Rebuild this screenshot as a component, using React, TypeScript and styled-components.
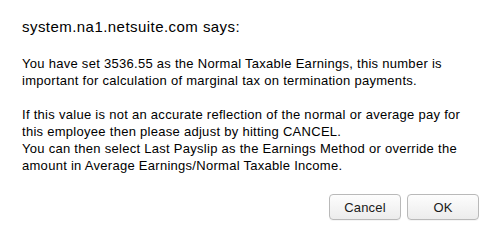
import React from 'react';
import styled, { createGlobalStyle } from 'styled-components';

const GlobalStyle = createGlobalStyle`
  html, body {
    margin: 0;
    padding: 0;
    background: #ffffff;
  }
  body {
    font-family: "Liberation Sans", Arial, sans-serif;
    -webkit-font-smoothing: antialiased;
  }
`;

const Dialog = styled.div`
  width: 500px;
  height: 241px;
  box-sizing: border-box;
  background: #ffffff;
  padding: 18px 21px 0 22px;
  display: flex;
  flex-direction: column;
`;

const Title = styled.h1`
  margin: 0;
  font-size: 15px;
  font-weight: normal;
  line-height: 18px;
  letter-spacing: 0.45px;
  color: #000;
`;

const Message = styled.div`
  margin-top: 19px;
  font-size: 13px;
  line-height: 17px;
  letter-spacing: 0.28px;
  color: #000;
`;

const Paragraph = styled.p`
  margin: 0 0 17px;
  &:last-child {
    margin-bottom: 0;
  }
`;

const Actions = styled.div`
  margin-top: 20px;
  display: flex;
  justify-content: flex-end;
  gap: 6px;
`;

const Button = styled.button`
  width: 72px;
  height: 26px;
  box-sizing: border-box;
  border: 1px solid #b9b9b9;
  border-radius: 4px;
  background: linear-gradient(#fdfdfd, #ececec);
  font-family: "Liberation Sans", Arial, sans-serif;
  font-size: 13px;
  letter-spacing: 0.2px;
  color: #1a1a1a;
  padding: 0;
  box-shadow: 0 1px 0 rgba(0, 0, 0, 0.04);
`;

export default function App() {
  return (
    <>
      <GlobalStyle />
      <Dialog>
        <Title>system.na1.netsuite.com says:</Title>
        <Message>
          <Paragraph>
            You have set 3536.55 as the Normal Taxable Earnings, this number is
            <br />
            important for calculation of marginal tax on termination payments.
          </Paragraph>
          <Paragraph>
            If this value is not an accurate reflection of the normal or average pay for
            <br />
            this employee then please adjust by hitting CANCEL.
            <br />
            You can then select Last Payslip as the Earnings Method or override the
            <br />
            amount in Average Earnings/Normal Taxable Income.
          </Paragraph>
        </Message>
        <Actions>
          <Button>Cancel</Button>
          <Button>OK</Button>
        </Actions>
      </Dialog>
    </>
  );
}
